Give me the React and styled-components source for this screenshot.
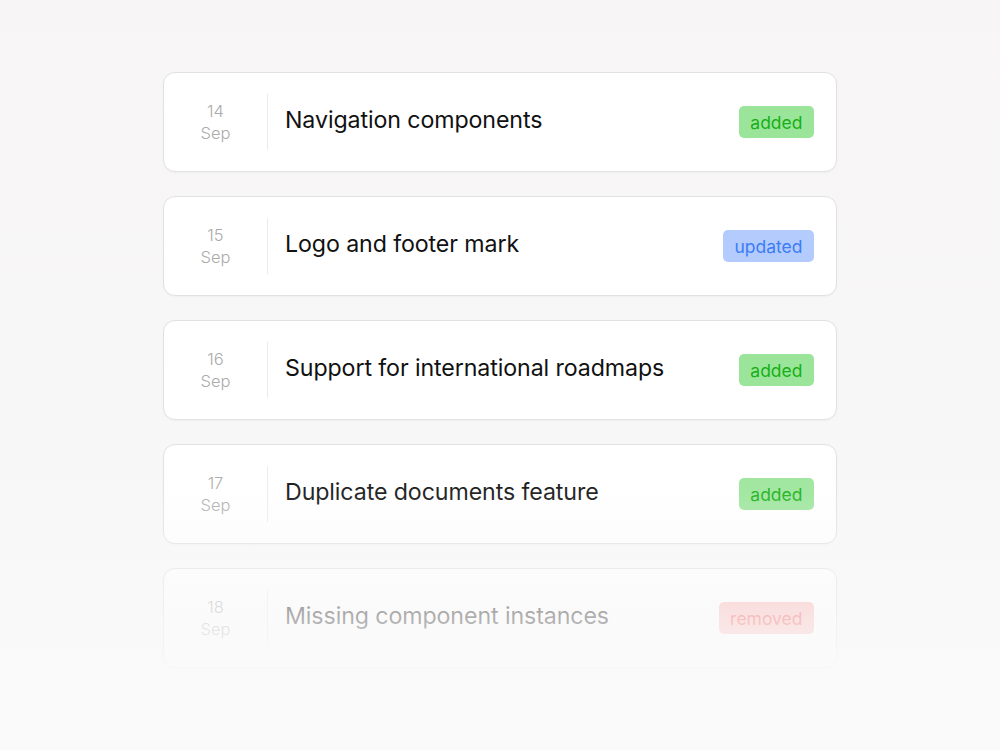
import React from "react";
import styled, { createGlobalStyle } from "styled-components";

const Global = createGlobalStyle`
  html, body { margin: 0; padding: 0; }
  body {
    background: #f7f5f5;
    font-family: Inter, "Noto Sans", sans-serif;
    -webkit-font-smoothing: antialiased;
  }
`;

const Page = styled.div`
  position: relative;
  width: 1000px;
  height: 750px;
  overflow: hidden;
  background: linear-gradient(to bottom, #f7f5f5 0%, #f8f7f7 55%, #fafafa 100%);
  display: flex;
  justify-content: center;
  padding-top: 72px;
  box-sizing: border-box;
`;

const List = styled.div`
  width: 674px;
  display: flex;
  flex-direction: column;
  gap: 24px;
`;

const Card = styled.div`
  height: 100px;
  box-sizing: border-box;
  background: #fff;
  border: 1px solid #e2e1e1;
  border-radius: 12px;
  box-shadow: 0 1px 2px rgba(0, 0, 0, 0.03);
  display: flex;
  align-items: center;
  padding-right: 22px;
`;

const DateCol = styled.div`
  width: 103px;
  display: flex;
  flex-direction: column;
  align-items: center;
  font-size: 16.5px;
  line-height: 22px;
  color: #ababab;
  font-weight: 300;
`;

const Divider = styled.div`
  width: 1px;
  height: 56px;
  background: #ececec;
`;

const Title = styled.div`
  flex: 1;
  padding-left: 17px;
  font-size: 23.2px;
  color: #111;
  letter-spacing: -0.1px;
  padding-bottom: 5px;
`;

const tones = {
  added: { bg: "#9be59b", fg: "#17b017" },
  updated: { bg: "#b4ccfd", fg: "#3d7cf4" },
  removed: { bg: "#fbb4b4", fg: "#f04545" },
};

const Badge = styled.div`
  height: 32px;
  box-sizing: border-box;
  padding: 0 11.5px;
  border-radius: 5px;
  display: flex;
  align-items: center;
  font-size: 17.5px;
  background: ${(p) => tones[p.$kind].bg};
  color: ${(p) => tones[p.$kind].fg};
`;

const Fade = styled.div`
  position: absolute;
  inset: 0;
  pointer-events: none;
  background: linear-gradient(
    to bottom,
    rgba(249, 248, 248, 0) 0px,
    rgba(249, 248, 248, 0) 440px,
    rgba(249, 248, 248, 0.08) 492px,
    rgba(249, 248, 248, 0.68) 616px,
    rgba(250, 250, 250, 0.96) 690px,
    rgba(250, 250, 250, 1) 750px
  );
`;

const items = [
  { day: 14, title: "Navigation components", kind: "added" },
  { day: 15, title: "Logo and footer mark", kind: "updated" },
  { day: 16, title: "Support for international roadmaps", kind: "added" },
  { day: 17, title: "Duplicate documents feature", kind: "added" },
  { day: 18, title: "Missing component instances", kind: "removed" },
];

export default function App() {
  return (
    <>
      <Global />
      <Page>
        <List>
          {items.map((it) => (
            <Card key={it.day}>
              <DateCol>
                <span>{it.day}</span>
                <span>Sep</span>
              </DateCol>
              <Divider />
              <Title>{it.title}</Title>
              <Badge $kind={it.kind}>{it.kind}</Badge>
            </Card>
          ))}
        </List>
        <Fade />
      </Page>
    </>
  );
}
